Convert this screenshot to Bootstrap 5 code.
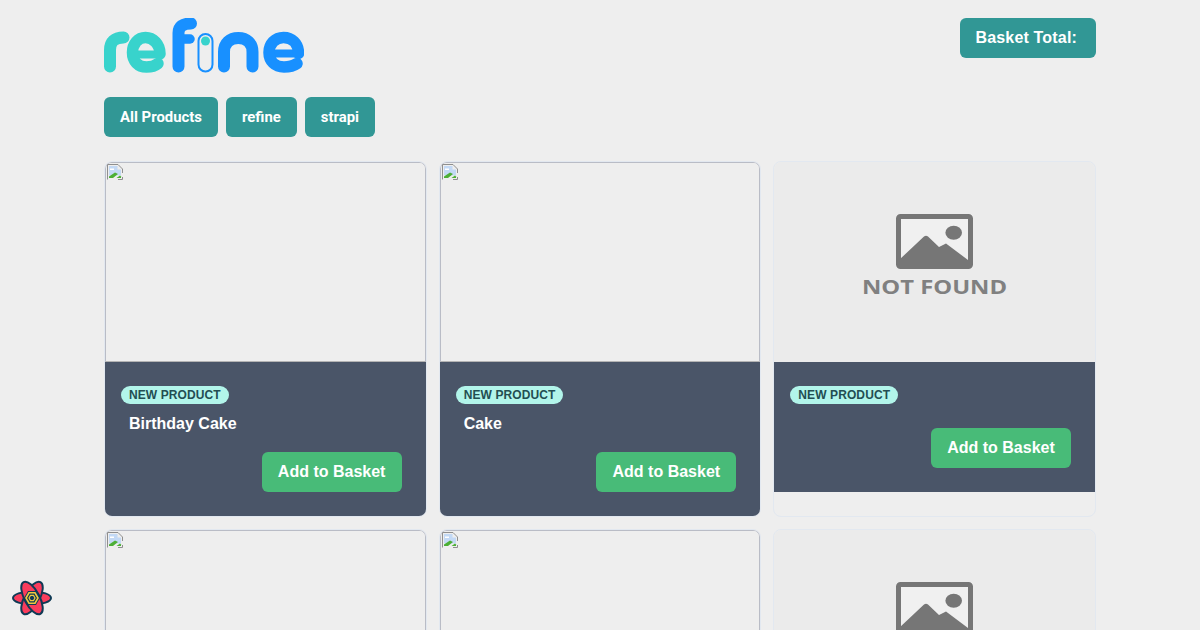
<!DOCTYPE html>
<html lang="en">
<head>
<meta charset="utf-8">
<title>refine</title>
<link href="https://cdn.jsdelivr.net/npm/bootstrap@5.3.0/dist/css/bootstrap.min.css" rel="stylesheet">
<style>
html, body { overflow: hidden; height: 630px; }
body { background: #eeeeee; font-family: "Liberation Sans", Arial, sans-serif; color: #1a202c; }
.shop-page { width: 992px; margin: 0 auto; padding-top: 18px; }
.shop-logo { display: block; width: 200px; height: 56px; }
.btn-teal { background: #319795; color: #fff; border: 0; border-radius: 6px; height: 40px; padding: 0 16px; font-weight: 700; line-height: 40px; }
.btn-teal:hover { background: #2c7a7b; color: #fff; }
.btn-total { font-size: 16px; letter-spacing: .17px; font-family: "Liberation Sans", Arial, sans-serif; padding-right: 19px; }
.btn-cat { font-size: 14.9px; font-family: Roboto, Arial, sans-serif; }
.cat-row { margin-top: 23px; margin-bottom: 24px; gap: 8px; }
.prod-grid { display: grid; grid-template-columns: repeat(3, 1fr); gap: 12px; }
.prod-card { background: transparent; border: 1px solid #e2e8f0; border-radius: 8px; overflow: hidden; }
.prod-img { height: 200px; }
.prod-broken { border: 1px solid #b9bcc6; border-bottom-color: #b4b4b4; border-radius: 6px 6px 0 0; padding: 1px 0 0 1px; }
.prod-broken svg { display: block; }
.prod-missing { background: #ebebeb; display: flex; justify-content: center; padding-top: 52px; }
.prod-panel { background: #4a5568; padding: 24px; }
.new-tag { background: #b2f5ea; color: #234e52; font-size: 12px; font-weight: 700; letter-spacing: .1px; line-height: 18px; padding: 0 8px; border-radius: 9px; display: inline-block; vertical-align: top; height: 18px; margin-left: -8px; }
.tag-line { height: 18px; line-height: 18px; }
.prod-name { color: #fff; font-size: 16px; font-weight: 700; line-height: 24px; margin: 8px 0 -8px 0; }
.btn-add { background: #48bb78; color: #fff; border: 0; border-radius: 6px; font-size: 16px; font-weight: 700; height: 40px; width: 140px; padding: 0; line-height: 40px; }
.btn-add:hover { background: #38a169; color: #fff; }
.add-line { margin-top: 24px; }
.devtools-mark { position: fixed; left: 12px; top: 580px; width: 40px; height: 36px; }
</style>
</head>
<body>
<div class="shop-page">
  <div class="d-flex justify-content-between align-items-start">
    <svg class="shop-logo" viewBox="104 18 200 56" fill="none" stroke-linecap="round" role="img" aria-label="refine">
      <path d="M110 66.500V50Q110 37.500 123.500 37.500" stroke="#38d3cc" stroke-width="12"/>
      <path d="M135 54.500H160" stroke="#38d3cc" stroke-width="8" stroke-linecap="butt"/>
      <path d="M160 54C160 44 153 37.500 145.500 37.500C138 37.500 132.500 44 132.500 52.500C132.500 61 138 67 146.500 67C151 67 155 66 158 63.500" stroke="#38d3cc" stroke-width="11.500"/>
      <path d="M178.500 66.500V33Q178.500 23.500 191 23.500" stroke="#1890ff" stroke-width="12"/>
      <path d="M178 39H190" stroke="#1890ff" stroke-width="9.500"/>
      <rect x="198.500" y="34" width="14" height="37.500" rx="7" stroke="#1890ff" stroke-width="2"/>
      <circle cx="205.500" cy="41" r="4.500" fill="#38d3cc"/>
      <path d="M224 66.500V52C224 43 230 38 238.300 38C246.500 38 252.500 43 252.500 52V66.500" stroke="#1890ff" stroke-width="12"/>
      <path d="M272 53.500H299" stroke="#1890ff" stroke-width="8" stroke-linecap="butt"/>
      <path d="M298.500 53.500C298.500 43 291.500 37.500 283.500 37.500C275 37.500 269 44 269 52.500C269 61 275 67 284 67C289 67 293.500 66 297 63.500" stroke="#1890ff" stroke-width="11.500"/>
    </svg>
    <button type="button" class="btn btn-teal btn-total">Basket Total:</button>
  </div>
  <div class="d-flex cat-row">
    <button type="button" class="btn btn-teal btn-cat">All Products</button>
    <button type="button" class="btn btn-teal btn-cat">refine</button>
    <button type="button" class="btn btn-teal btn-cat">strapi</button>
  </div>
  <div class="prod-grid">
    <div class="prod-card">
      <div class="prod-img prod-broken">
        <svg width="16" height="16" viewBox="0 0 16 16"><path d="M.5 15.500V.5H11L15.500 5V9M15.500 13V15.500H11" fill="none" stroke="#8f8f8f"/><path d="M2 2H10.500V5.500H14V11.500H2Z" fill="#c3d9f5"/><path d="M3 4.500H7V6H3Z" fill="#fff"/><path d="M2 14V12.500L8 8.500L11 10L6 14Z" fill="#4caf35"/><path d="M9.500 14L13 11.500L14 12.500V14Z" fill="#4caf35"/></svg>
      </div>
      <div class="prod-panel">
        <div class="tag-line"><span class="new-tag text-nowrap">NEW PRODUCT</span></div>
        <div class="prod-name">Birthday Cake</div>
        <div class="d-flex justify-content-end add-line"><button type="button" class="btn btn-add">Add to Basket</button></div>
      </div>
    </div>
    <div class="prod-card">
      <div class="prod-img prod-broken">
        <svg width="16" height="16" viewBox="0 0 16 16"><path d="M.5 15.500V.5H11L15.500 5V9M15.500 13V15.500H11" fill="none" stroke="#8f8f8f"/><path d="M2 2H10.500V5.500H14V11.500H2Z" fill="#c3d9f5"/><path d="M3 4.500H7V6H3Z" fill="#fff"/><path d="M2 14V12.500L8 8.500L11 10L6 14Z" fill="#4caf35"/><path d="M9.500 14L13 11.500L14 12.500V14Z" fill="#4caf35"/></svg>
      </div>
      <div class="prod-panel">
        <div class="tag-line"><span class="new-tag text-nowrap">NEW PRODUCT</span></div>
        <div class="prod-name">Cake</div>
        <div class="d-flex justify-content-end add-line"><button type="button" class="btn btn-add">Add to Basket</button></div>
      </div>
    </div>
    <div class="prod-card">
      <div class="prod-img prod-missing">
        <svg width="145" height="86" viewBox="0 0 145 86">
          <rect x="36.500" y="2.500" width="72" height="50" rx="2" fill="#f0f0f0" stroke="#767676" stroke-width="5"/>
          <path d="M37 46L62 22.500Q64 21 66 22.500L77 33L84 29.500L106 46V51H37Z" fill="#767676"/>
          <ellipse cx="91.700" cy="18.700" rx="8.300" ry="7" fill="#767676"/>
          <text x="0" y="79.500" textLength="145" lengthAdjust="spacingAndGlyphs" font-family="Open Sans, sans-serif" font-weight="700" font-size="20" fill="#808080">NOT FOUND</text>
        </svg>
      </div>
      <div class="prod-panel">
        <div class="tag-line"><span class="new-tag text-nowrap">NEW PRODUCT</span></div>
        <div class="d-flex justify-content-end add-line"><button type="button" class="btn btn-add">Add to Basket</button></div>
      </div>
    </div>
    <div class="prod-card">
      <div class="prod-img prod-broken">
        <svg width="16" height="16" viewBox="0 0 16 16"><path d="M.5 15.500V.5H11L15.500 5V9M15.500 13V15.500H11" fill="none" stroke="#8f8f8f"/><path d="M2 2H10.500V5.500H14V11.500H2Z" fill="#c3d9f5"/><path d="M3 4.500H7V6H3Z" fill="#fff"/><path d="M2 14V12.500L8 8.500L11 10L6 14Z" fill="#4caf35"/><path d="M9.500 14L13 11.500L14 12.500V14Z" fill="#4caf35"/></svg>
      </div>
    </div>
    <div class="prod-card">
      <div class="prod-img prod-broken">
        <svg width="16" height="16" viewBox="0 0 16 16"><path d="M.5 15.500V.5H11L15.500 5V9M15.500 13V15.500H11" fill="none" stroke="#8f8f8f"/><path d="M2 2H10.500V5.500H14V11.500H2Z" fill="#c3d9f5"/><path d="M3 4.500H7V6H3Z" fill="#fff"/><path d="M2 14V12.500L8 8.500L11 10L6 14Z" fill="#4caf35"/><path d="M9.500 14L13 11.500L14 12.500V14Z" fill="#4caf35"/></svg>
      </div>
    </div>
    <div class="prod-card">
      <div class="prod-img prod-missing">
        <svg width="145" height="56" viewBox="0 0 145 56">
          <rect x="36.500" y="2.500" width="72" height="50" rx="2" fill="#f0f0f0" stroke="#767676" stroke-width="5"/>
          <path d="M37 46L62 22.500Q64 21 66 22.500L77 33L84 29.500L106 46V51H37Z" fill="#767676"/>
          <ellipse cx="91.700" cy="18.700" rx="8.300" ry="7" fill="#767676"/>
        </svg>
      </div>
    </div>
  </div>
</div>
<svg class="devtools-mark" viewBox="0 0 40 36" role="img" aria-label="devtools">
  <g fill="#f93c5c" stroke="#0f3a55" stroke-width="2">
    <ellipse cx="20" cy="18" rx="19" ry="6.500"/>
    <ellipse cx="20" cy="18" rx="7.500" ry="18" transform="rotate(28 20 18)"/>
    <ellipse cx="20" cy="18" rx="7.500" ry="18" transform="rotate(-28 20 18)"/>
  </g>
  <path d="M12 18L16 11H24L28 18L24 25H16Z" fill="#0f3a55"/>
  <path d="M14 18L17 12.800H23L26 18L23 23.200H17Z" fill="none" stroke="#f0c93f" stroke-width="1.600"/>
  <path d="M17 18L18.500 15.400H21.500L23 18L21.500 20.600H18.500Z" fill="none" stroke="#f0c93f" stroke-width="1.200"/>
</svg>
<script src="https://cdn.jsdelivr.net/npm/bootstrap@5.3.0/dist/js/bootstrap.bundle.min.js"></script>
</body>
</html>
